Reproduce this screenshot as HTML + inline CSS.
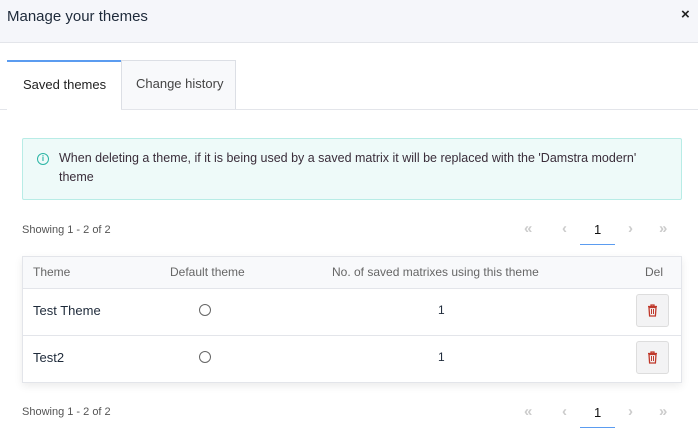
<!DOCTYPE html><html><head><style>
body{margin:0;width:698px;height:434px;overflow:hidden;background:#fff;font-family:"Liberation Sans",sans-serif;color:#333;position:relative}
.a{position:absolute}
.p{font-size:15px;color:#ccc;font-weight:bold}
</style></head><body>
<div class="a" style="left:0;top:0;width:698px;height:42px;background:#f5f6fa;border-bottom:1px solid #e3e5ea"></div>
<div class="a" style="left:7px;top:8px;font-size:15px;color:#1e2a3a">Manage your themes</div>
<div class="a" style="left:681px;top:6px;font-size:15px;font-weight:bold;color:#222">×</div>
<div class="a" style="left:0;top:109px;width:698px;height:1px;background:#e3e5ea"></div>
<div class="a" style="left:7px;top:60px;width:114px;height:50px;background:#fff;border-top:2px solid #5b9cf0;box-sizing:border-box"></div>
<div class="a" style="left:23px;top:77px;font-size:13px;color:#222">Saved themes</div>
<div class="a" style="left:121px;top:60px;width:115px;height:49px;background:#f8f9fb;border:1px solid #dcdfe5;border-bottom:none;box-sizing:border-box"></div>
<div class="a" style="left:136px;top:76px;font-size:13px;color:#444">Change history</div>
<div class="a" style="left:22px;top:138px;width:660px;height:62px;background:#eefaf9;border:1px solid #b8ece6;box-sizing:border-box;border-radius:2px"></div>
<div class="a" style="left:37px;top:153px;width:10px;height:10px;border:1px solid #2bb5a5;border-radius:50%;font-size:8px;color:#2bb5a5;text-align:center;line-height:10px;font-weight:bold">i</div>
<div class="a" style="left:59px;top:149px;width:600px;font-size:12.5px;line-height:19px;color:#3a2d3a">When deleting a theme, if it is being used by a saved matrix it will be replaced with the 'Damstra modern' theme</div>
<div class="a" style="left:22px;top:224px;font-size:11px;color:#555">Showing 1 - 2 of 2</div>
<div class="a" style="left:22px;top:406px;font-size:11px;color:#555">Showing 1 - 2 of 2</div>
<div class="a p" style="left:524px;top:220px">«</div><div class="a p" style="left:562px;top:220px">‹</div>
<div class="a" style="left:594px;top:222px;font-size:13px;color:#111">1</div><div class="a" style="left:580px;top:244px;width:35px;height:1px;background:#5b9cf0"></div>
<div class="a p" style="left:628px;top:220px">›</div><div class="a p" style="left:659px;top:220px">»</div>
<div class="a p" style="left:524px;top:403px">«</div><div class="a p" style="left:562px;top:403px">‹</div>
<div class="a" style="left:594px;top:405px;font-size:13px;color:#111">1</div><div class="a" style="left:580px;top:427px;width:35px;height:1px;background:#5b9cf0"></div>
<div class="a p" style="left:628px;top:403px">›</div><div class="a p" style="left:659px;top:403px">»</div>
<div class="a" style="left:22px;top:256px;width:660px;height:127px;border:1px solid #e3e5ea;box-sizing:border-box;box-shadow:0 3px 8px rgba(0,0,0,.08)"></div>
<div class="a" style="left:23px;top:257px;width:658px;height:31px;background:#f8f9fb;border-bottom:1px solid #e3e5ea"></div>
<div class="a" style="left:23px;top:335px;width:658px;height:1px;background:#e3e5ea"></div>
<div class="a" style="left:33px;top:265px;font-size:12px;color:#666">Theme</div>
<div class="a" style="left:170px;top:265px;font-size:12px;color:#666">Default theme</div>
<div class="a" style="left:332px;top:265px;font-size:12px;color:#666">No. of saved matrixes using this theme</div>
<div class="a" style="left:645px;top:265px;font-size:12px;color:#666">Del</div>
<div class="a" style="left:33px;top:303px;font-size:13px;color:#1e2a3a">Test Theme</div>
<div class="a" style="left:33px;top:350px;font-size:13px;color:#1e2a3a">Test2</div>
<div class="a" style="left:199px;top:304px;width:10px;height:10px;border:1px solid #666;border-radius:50%"></div>
<div class="a" style="left:199px;top:351px;width:10px;height:10px;border:1px solid #666;border-radius:50%"></div>
<div class="a" style="left:438px;top:303px;font-size:12px;color:#1e2a3a">1</div>
<div class="a" style="left:438px;top:350px;font-size:12px;color:#1e2a3a">1</div>
<div class="a" style="left:636px;top:294px;width:33px;height:33px;background:#f3f3f4;border:1px solid #ddd;border-radius:3px;box-sizing:border-box"></div>
<div class="a" style="left:636px;top:341px;width:33px;height:33px;background:#f3f3f4;border:1px solid #ddd;border-radius:3px;box-sizing:border-box"></div>
<svg class="a" style="left:647px;top:304px" width="11" height="13" viewBox="0 0 11 13"><path d="M1 2.5h9M4 2.5V1h3v1.5M2 3.5h7l-.6 8.5H2.6z" fill="none" stroke="#c0392b" stroke-width="1.3"/><path d="M4.5 5v5M6.5 5v5" stroke="#c0392b" stroke-width="1"/></svg>
<svg class="a" style="left:647px;top:351px" width="11" height="13" viewBox="0 0 11 13"><path d="M1 2.5h9M4 2.5V1h3v1.5M2 3.5h7l-.6 8.5H2.6z" fill="none" stroke="#c0392b" stroke-width="1.3"/><path d="M4.5 5v5M6.5 5v5" stroke="#c0392b" stroke-width="1"/></svg>
</body></html>
